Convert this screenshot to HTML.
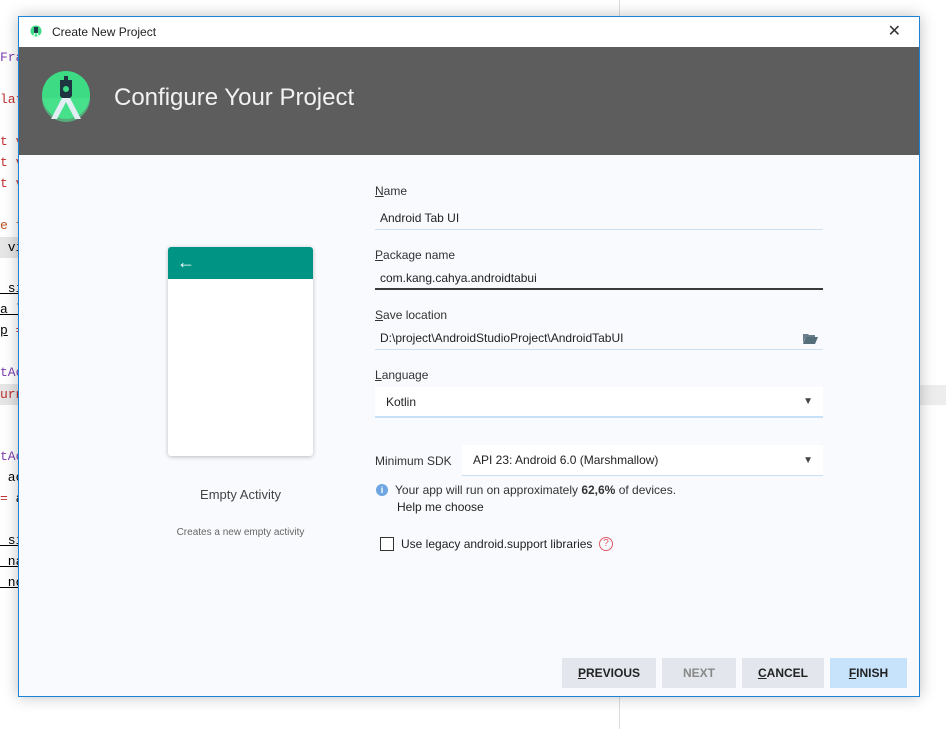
<!DOCTYPE html>
<html><head><meta charset="utf-8"><style>
*{margin:0;padding:0;box-sizing:border-box}
body{width:946px;height:729px;background:#fff;position:relative;overflow:hidden;font-family:"Liberation Sans",sans-serif}
.code{position:absolute;left:0;font:13px "Liberation Mono",monospace;white-space:pre;color:#000}
.dlg{position:absolute;left:18px;top:16px;width:902px;height:681px;border:1px solid #1883d7;background:#f8fafd;box-shadow:0 0 14px rgba(0,0,0,.25)}
.title{height:30px;background:#fff;font-size:12px;color:#222;line-height:30px;padding-left:33px;position:relative}
.hdr{height:108px;background:#5d5d5d;position:relative}
.hdr h1{position:absolute;left:95px;top:37px;font-weight:normal;color:#f2f2f2;font-size:24px}
.lbl{position:absolute;left:356px;font-size:12px;color:#333}
.val{position:absolute;left:356px;width:448px;font-size:12px;color:#222;padding-left:5px}
.ul{position:absolute;left:356px;width:448px;height:1px;background:#cfe0f0}
.btn{position:absolute;top:641px;height:30px;font-size:12px;font-weight:bold;color:#222;background:#e3e7ed;text-align:center;line-height:30px}
u{text-decoration:underline}
</style></head><body>
<div style="position:absolute;left:619px;top:0;width:1px;height:729px;background:#ddd"></div>
<div style="position:absolute;left:920px;top:385px;width:26px;height:20px;background:#ededed"></div>
<div class="code" style="top:50px;color:#8040b0">Fra</div>
<div class="code" style="top:92px;color:#c03030">lat</div>
<div class="code" style="top:134px;color:#c03030">t v</div>
<div class="code" style="top:155px;color:#c03030">t v</div>
<div class="code" style="top:176px;color:#c03030">t v</div>
<div class="code" style="top:218px;color:#c05020">e f</div>
<div class="code" style="top:237px;background:#e6e6e6;width:18px;height:21px;line-height:21px"> vi</div>
<div class="code" style="top:281px;text-decoration:underline"> si</div>
<div class="code" style="top:302px;text-decoration:underline">a l</div>
<div class="code" style="top:323px"><u>p</u> <span style="color:#c03030">=</span></div>
<div class="code" style="top:365px;color:#8040b0">tAc</div>
<div class="code" style="top:384px;background:#e6e6e6;color:#c03030;width:18px;height:21px;line-height:21px">urn</div>
<div class="code" style="top:449px;color:#8040b0">tAc</div>
<div class="code" style="top:470px"> act</div>
<div class="code" style="top:491px"><span style="color:#c03030">=</span> a</div>
<div class="code" style="top:533px;text-decoration:underline"> si</div>
<div class="code" style="top:554px;text-decoration:underline"> na</div>
<div class="code" style="top:575px;text-decoration:underline"> no</div>

<div class="dlg">
 <div class="title">
  <svg style="position:absolute;left:10px;top:8px" width="14" height="14" viewBox="0 0 14 14"><circle cx="7" cy="6" r="5.5" fill="#3ddc84"/><rect x="5" y="2" width="4" height="6" fill="#1e3a4a"/><path d="M4 13L6 8M10 13L8 8" stroke="#dfe" stroke-width="1.5"/></svg>
  Create New Project
  <span style="position:absolute;right:18px;top:0;font-size:16px;color:#333">✕</span>
 </div>
 <div class="hdr">
  <svg style="position:absolute;left:22px;top:23px" width="52" height="54" viewBox="0 0 52 54"><circle cx="25" cy="25" r="24" fill="#3ddc84"/><path d="M1 28A24 24 0 0 0 49 28Z" fill="#4ee28f" opacity=".6"/><path d="M19 10h12v16l-6 6-6-6z" fill="#1e3440"/><rect x="23" y="6" width="4" height="5" fill="#1e3440"/><circle cx="25" cy="19" r="3" fill="#3ddc84"/><path d="M21 28L10 49h6l9-17 9 17h6L29 28z" fill="#e2edf4"/></svg>
  <h1>Configure Your Project</h1>
 </div>
 <!-- phone preview -->
 <div style="position:absolute;left:149px;top:230px;width:145px;height:209px;background:#fff;border-radius:3px;box-shadow:0 1px 4px rgba(0,0,0,.25);overflow:hidden">
  <div style="height:32px;background:#009485;color:#fff;font-size:18px;line-height:30px;padding-left:9px">←</div>
 </div>
 <div style="position:absolute;left:149px;top:470px;width:145px;text-align:center;font-size:13px;color:#444">Empty Activity</div>
 <div style="position:absolute;left:139px;top:510px;width:165px;text-align:center;font-size:10px;color:#666">Creates a new empty activity</div>

 <div class="lbl" style="top:167px"><u>N</u>ame</div>
 <div class="val" style="top:194px">Android Tab UI</div>
 <div class="ul" style="top:212px"></div>
 <div class="lbl" style="top:231px"><u>P</u>ackage name</div>
 <div class="val" style="top:254px">com.kang.cahya.androidtabui</div>
 <div class="ul" style="top:271px;height:2px;background:#3a3a3a"></div>
 <div class="lbl" style="top:291px"><u>S</u>ave location</div>
 <div class="val" style="top:314px">D:\project\AndroidStudioProject\AndroidTabUI</div>
 <svg style="position:absolute;left:784px;top:316px" width="15" height="11" viewBox="0 0 15 11"><path d="M0 1h5l1 1h6v2H3L0 10z" fill="#6a7f8c"/><path d="M3 4h12l-3 7H0z" fill="#546e7a"/></svg>
 <div class="ul" style="top:332px"></div>
 <div class="lbl" style="top:351px"><u>L</u>anguage</div>
 <div style="position:absolute;left:356px;top:370px;width:448px;height:31px;background:#fff;border-bottom:2px solid #c6e0f7;font-size:12px;color:#222;line-height:30px;padding-left:11px">Kotlin<span style="position:absolute;right:10px;font-size:10px;color:#444">▼</span></div>
 <div class="lbl" style="top:437px">Minimum SDK</div>
 <div style="position:absolute;left:443px;top:428px;width:361px;height:31px;background:#fff;border-bottom:1px solid #c6e0f7;font-size:12px;color:#222;line-height:31px;padding-left:11px">API 23: Android 6.0 (Marshmallow)<span style="position:absolute;right:10px;font-size:10px;color:#444">▼</span></div>
 <div style="position:absolute;left:357px;top:467px;width:12px;height:12px;border-radius:50%;background:#6ea6e0;color:#fff;font-size:9px;font-weight:bold;text-align:center;line-height:12px">i</div>
 <div style="position:absolute;left:376px;top:466px;font-size:12px;color:#333">Your app will run on approximately <b>62,6%</b> of devices.</div>
 <div style="position:absolute;left:378px;top:483px;font-size:12px;color:#222">Help me choose</div>
 <div style="position:absolute;left:361px;top:520px;width:14px;height:14px;border:1px solid #333;background:#fff"></div>
 <div style="position:absolute;left:382px;top:520px;font-size:12px;color:#222">Use legacy android.support libraries</div>
 <div style="position:absolute;left:580px;top:520px;width:14px;height:14px;border:1.5px solid #e05a6a;border-radius:50%;color:#e05a6a;font-size:10px;text-align:center;line-height:12px">?</div>

 <div class="btn" style="left:543px;width:94px"><u>P</u>REVIOUS</div>
 <div class="btn" style="left:643px;width:74px;color:#888">NEXT</div>
 <div class="btn" style="left:723px;width:82px"><u>C</u>ANCEL</div>
 <div class="btn" style="left:811px;width:77px;background:#c7e3fb"><u>F</u>INISH</div>
</div>
</body></html>
